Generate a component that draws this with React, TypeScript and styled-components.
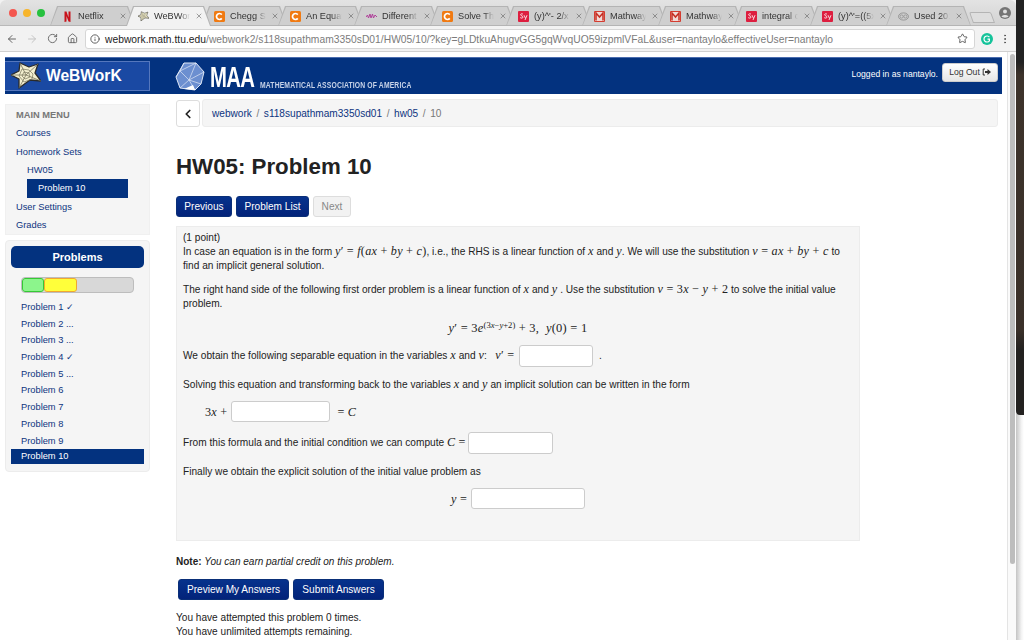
import React from "react";
import styled, { createGlobalStyle } from "styled-components";
import { ArrowLeft, ArrowRight, RotateCw, Home, Info, Star, MoreVertical, X, ChevronLeft } from "lucide-react";

const Global = createGlobalStyle`
  html, body { margin: 0; padding: 0; width: 1024px; height: 640px; overflow: hidden; background: #fff; }
  * { box-sizing: border-box; }
`;
const Blue = "#03327f";
const Win = styled.div`
  width: 1024px; height: 640px; overflow: hidden; display: flex;
  font-family: "Liberation Sans", Arial, sans-serif; background: #fff;
`;
const Window = styled.div`width: 1016px; flex: none; display: flex; flex-direction: column; height: 640px;`;
const Desktop = styled.div`flex: 1; display: flex; flex-direction: column; background: linear-gradient(90deg, #c4c4c4, #f4f4f4 70%, #fff);`;
const Wallpaper = styled.div`
  height: 415px; flex: none; border-bottom-left-radius: 4px;
  background: linear-gradient(#222 0, #222 62px, #3d332b 75px, #3a3029 330px, #232120 350px, #232120 100%);
`;
const Chrome = styled.div`flex: none; background: #f2f2f2;`;
const TabBar = styled.div`
  height: 26px; display: flex; align-items: flex-end; padding-left: 50px; position: relative;
  background: linear-gradient(#e3e3e3, #d3d3d3); border-top-left-radius: 6px; border-top-right-radius: 6px;
  border-bottom: 1px solid #b9b9b9;
`;
const Lights = styled.div`position: absolute; left: 9px; top: 9px; display: flex; gap: 6px;`;
const Light = styled.span<{ $c: string }>`width: 8px; height: 8px; border-radius: 50%; background: ${p => p.$c};`;
const Tab = styled.div<{ $active?: boolean }>`
  width: 85px; height: 20px; margin-right: -9px; flex: none; position: relative; margin-bottom: -1px;
  padding: 0 6px 0 12px; display: flex; align-items: center; gap: 5px;
  z-index: ${p => (p.$active ? 2 : 1)};
  clip-path: polygon(0 100%, 7px 0, calc(100% - 7px) 0, 100% 100%);
  background: #b4b4b4;
  &::before {
    content: ""; position: absolute; inset: 1px 1px ${p => (p.$active ? "0" : "1px")} 1px; z-index: -1;
    background: ${p => (p.$active ? "#f2f2f2" : "#cfcfcf")};
    clip-path: polygon(0 100%, 7px 0, calc(100% - 7px) 0, 100% 100%);
  }
`;
const TabIcon = styled.span`width: 11px; height: 11px; flex: none; display: flex;`;
const TabTitle = styled.span`
  font-size: 9.2px; color: #333; white-space: nowrap; overflow: hidden; width: 36px; flex: none;
  -webkit-mask-image: linear-gradient(90deg, #000 72%, transparent 100%);
  mask-image: linear-gradient(90deg, #000 72%, transparent 100%);
`;
const TabClose = styled.span`display: flex; color: #555; flex: none; margin-left: auto; margin-right: 7px;`;
const NewTab = styled.div`
  width: 22px; height: 11px; margin: 0 0 2px 9px; flex: none; background: #dedede; border: 1px solid #b4b4b4; border-radius: 2px 2px 0 0;
  transform: skewX(20deg);
`;
const Avatar = styled.div`position: absolute; right: 5px; top: 7px; display: flex;`;
const Toolbar = styled.div`
  height: 26px; display: flex; align-items: center; padding-left: 2px; color: #5f5f5f; border-bottom: 1px solid #d0d0d0;
`;
const NavBtn = styled.span<{ $dim?: boolean }>`
  width: 20px; display: flex; justify-content: center; flex: none; color: ${p => (p.$dim ? "#c4c4c4" : "#666")};
`;
const Omni = styled.div`
  width: 890px; height: 20px; margin-left: 3px; background: #fff; border: 1px solid #d6d6d6; border-radius: 3px; display: flex; align-items: center;
  padding: 0 6px 0 4px; flex: none;
`;
const Url = styled.span`font-size: 10.28px; color: #7b7b7b; white-space: nowrap; margin-left: 5px; letter-spacing: 0.03px; padding-top: 1px; b { color: #222; font-weight: 400; }`;
const StarWrap = styled.span`margin-left: auto; display: flex; color: #555;`;
const ExtIcon = styled.span`
  width: 12px; height: 12px; border-radius: 50%; background: #15c39a; margin-left: 6px; display: flex; align-items: center; justify-content: center; flex: none;
`;
const Dots = styled.span`display: flex; color: #555; margin-left: 6px;`;

const Viewport = styled.div`flex: 1; min-height: 0; display: flex; background: #fff; overflow: hidden;`;
const Page = styled.div`width: 1007px; flex: none; padding: 5px 0 0 5px; display: flex; flex-direction: column; min-height: 0;`;
const Scroll = styled.div`
  flex: 1; background: #fafafa; border-left: 1px solid #e4e4e4; padding: 2px 1px 0 2px; display: flex;
`;
const Thumb = styled.div`width: 5px; height: 510px; background: #bdbdbd; border-radius: 3px;`;

const Header = styled.header`
  height: 37px; width: 997px; flex: none; background: ${Blue}; display: flex; align-items: center; border-top: 1px solid #4a6cae;
`;
const Brand = styled.div`
  width: 145px; height: 30px; background: #1a49a3; border: 1px solid #5577bd; border-left: 0; display: flex; align-items: center; gap: 5px; padding-left: 6px; flex: none;
  color: #fff; font-size: 15.6px; font-weight: 700;
`;
const MaaMark = styled.div`margin-left: 25px; display: flex; flex: none; align-items: center;`;
const MaaBig = styled.span`
  color: #fff; font-size: 29px; font-weight: 700; width: 44px; margin: 2px 0 0 5px; transform: scaleX(.7); transform-origin: left; letter-spacing: -1px; flex: none; line-height: 28px;
`;
const MaaSub = styled.span`
  color: #c8d3e8; font-size: 9.5px; font-weight: 700; white-space: nowrap; width: 153px; margin: 17px 0 0 6px; transform: scaleX(.715); transform-origin: left; letter-spacing: .2px; flex: none;
`;
const Logged = styled.span`margin-left: auto; margin-top: -5px; color: #fff; font-size: 8.6px; white-space: nowrap;`;
const LogOut = styled.span`
  background: linear-gradient(#fff, #e6e6e6); border: 1px solid #ccc; border-radius: 3px; height: 19px; width: 56px; margin: -8px 4px 0 4px; font-size: 8.6px; color: #333;
  display: flex; align-items: center; justify-content: center; gap: 2px; flex: none;
`;
const Columns = styled.div`display: flex; gap: 26px; padding-top: 5px; align-items: flex-start;`;
const Side = styled.aside`width: 145px; flex: none; display: flex; flex-direction: column; gap: 5px;`;
const Menu = styled.nav`background: #f5f5f5; height: 131px; margin-top: 5px; padding-top: 1px; border: 1px solid #f0f0f0;`;
const MenuHead = styled.div`height: 18.3px; line-height: 18px; padding-left: 10px; font-size: 9.3px; font-weight: 700; color: #777;`;
const MenuLink = styled.div<{ $lvl?: number }>`
  height: 18.3px; line-height: 18px; padding-left: ${p => 10 + (p.$lvl ?? 0) * 11}px; font-size: 9.3px; color: #0d3480;
`;
const MenuActive = styled.div`
  height: 19px; line-height: 18.5px; margin-left: 21px; width: 101px; padding-left: 11px; background: ${Blue}; color: #fff; font-size: 9.3px;
`;
const Panel = styled.section`
  background: #f5f5f5; border: 1px solid #ececec; border-radius: 4px; height: 232px; padding: 5px 5px 0;
`;
const PanelHead = styled.div`
  height: 22px; background: ${Blue}; border-radius: 5px; color: #fff; font-size: 11px; font-weight: 700; text-align: center; line-height: 22px;
`;
const Progress = styled.div`
  height: 16px; margin: 9px 10px 6px; background: #d8d8d8; border: 1px solid #bdbdbd; border-radius: 4px; display: flex; overflow: hidden;
`;
const Seg = styled.span<{ $bg: string; $bd: string; $w: number }>`
  width: ${p => p.$w}px; background: ${p => p.$bg}; border: 1px solid ${p => p.$bd}; border-radius: 3px; flex: none;
`;
const ProbLink = styled.div`height: 16.7px; line-height: 16px; padding-left: 10px; font-size: 9.3px; color: #0d3480;`;
const ProbActive = styled.div`height: 15px; line-height: 14.5px; padding-left: 10px; font-size: 9.3px; color: #fff; background: ${Blue};`;

const Main = styled.main`width: 822px; flex: none; font-size: 10.1px; color: #222;`;
const Crumbs = styled.div`display: flex; gap: 2px; height: 28px;`;
const Back = styled.div`
  width: 24px; height: 27px; background: #fff; border: 1px solid #ddd; border-radius: 3px; margin-top: 1px; display: flex; align-items: center; justify-content: center; color: #222; flex: none;
`;
const CrumbBar = styled.div`
  flex: 1; background: #f5f5f5; border: 1px solid #ececec; border-radius: 3px; padding-left: 9px; line-height: 27px; font-size: 10.1px; color: #777; word-spacing: 1.8px;
  span { color: #0d3480; }
`;
const Title = styled.h1`margin: 26px 0 0; height: 43px; font-size: 22.3px; line-height: 28px; font-weight: 700; color: #222;`;
const Btns = styled.div<{ $pad?: number }>`display: flex; gap: 4px; padding-left: ${p => p.$pad ?? 0}px;`;
const Btn = styled.span<{ $w: number; $off?: boolean }>`
  width: ${p => p.$w}px; height: 21px; border-radius: 3px; font-size: 10.1px; display: flex; align-items: center; justify-content: center; flex: none;
  color: ${p => (p.$off ? "#888" : "#fff")};
  background: ${p => (p.$off ? "#f2f2f2" : "linear-gradient(#06328c, #03237a)")};
  border: 1px solid ${p => (p.$off ? "#ddd" : "#0a2f78")};
`;
const Box = styled.div`
  width: 684px; height: 315px; margin-top: 9px; background: #f5f5f5; border: 1px solid #ececec; padding: 4px 6px 0;
  font-size: 10.15px; line-height: 14px; color: #222;
`;
const P = styled.p<{ $mt?: number }>`margin: ${p => p.$mt ?? 0}px 0 0; white-space: nowrap;`;
const Row = styled.div<{ $mt: number; $h: number; $pl?: number; $center?: boolean }>`
  display: flex; align-items: center; white-space: nowrap;
  margin-top: ${p => p.$mt}px; height: ${p => p.$h}px; padding-left: ${p => p.$pl ?? 0}px;
  justify-content: ${p => (p.$center ? "center" : "flex-start")};
`;
const Display = styled.span`font-size: 10.4px;`;
const M = styled.i`font-family: "Liberation Serif", "Times New Roman", serif; font-size: 1.2em; font-style: italic; color: #222; line-height: 0; letter-spacing: .25px;`;
const R = styled.span`font-family: "Liberation Serif", "Times New Roman", serif; font-size: 1.2em; font-style: normal; color: #222; line-height: 0; letter-spacing: .25px;`;
const Sup = styled.sup`font-family: "Liberation Serif", serif; font-size: 8.600px; line-height: 0; vertical-align: 4px;`;
const Field = styled.span<{ $w: number; $h: number; $ml?: number; $mr?: number }>`
  width: ${p => p.$w}px; height: ${p => p.$h}px; margin-left: ${p => p.$ml ?? 3}px; margin-right: ${p => p.$mr ?? 0}px; background: #fff; border: 1px solid #ccc; border-radius: 3px; flex: none; display: inline-block;
`;
const Note = styled.p`margin: 14px 0 0; font-size: 10px; line-height: 14px; i { font-style: italic; }`;
const Attempts = styled.p`margin: 11px 0 0; font-size: 10.1px; line-height: 14px;`;
const Gap = styled.div`height: 10px;`;

const Netflix = () => (
  <svg width="11" height="11" viewBox="0 0 11 11"><path d="M2.500 0.500h2l2 6v-6h2v10.500l-2-.4-2-5.600v5.600l-2 .4z" fill="#c8111a" /></svg>
);
const StarLogo = ({ s }: { s: number }) => (
  <svg width={s} height={s} viewBox="0 0 30 30">
    <path d="M9 2 L18 6 L27 3 L24 12 L30 20 L19 19 L8 27 L8 18 L0 14 L8 10 Z" fill="#f3efcf" stroke="#2a2a2a" strokeWidth="1.300" strokeLinejoin="round" />
    <path d="M15 14 L9 2 M15 14 L27 3 M15 14 L30 20 M15 14 L8 27 M15 14 L0 14" stroke="#77745c" strokeWidth=".8" fill="none" />
    <path d="M11 8 L18 9 L22 13 L21 18 L13 21 L8 15 Z M13 11 L18 12 L19 16 L14 18 L11 15 Z" fill="none" stroke="#77745c" strokeWidth=".7" />
  </svg>
);
const Chegg = () => (
  <svg width="11" height="11" viewBox="0 0 11 11"><rect width="11" height="11" rx="1.500" fill="#f07a12" /><path d="M7.800 3.600A3 3 0 1 0 7.800 7.400" stroke="#fff" strokeWidth="1.700" fill="none" /></svg>
);
const Sy = () => (
  <svg width="11" height="11" viewBox="0 0 11 11"><rect width="11" height="11" rx="1" fill="#dd1e3f" /><path d="M5 3.200C4 2.400 2.400 2.800 2.600 3.900 2.800 5 5 4.800 5 6.100 5 7.300 3.100 7.400 2.200 6.600M6 4.200l1.400 3M9 4.200 7 9" stroke="#fff" strokeWidth=".8" fill="none" /></svg>
);
const Mathway = () => (
  <svg width="11" height="11" viewBox="0 0 11 11"><rect width="11" height="11" rx="1" fill="#d43c30" /><rect x="1" y="1" width="9" height="9" fill="#f2d9d5" /><path d="M2 9.500V2l3.500 4L9 2v7.500" stroke="#c62e22" strokeWidth="1.500" fill="none" /></svg>
);
const Sym = () => (
  <svg width="11" height="11" viewBox="0 0 11 11"><path d="M0 6l1.500-2 1 3 1.500-4 1 4 1.500-4 1 4 1.500-3L11 6" stroke="#b0409a" strokeWidth="1" fill="none" /></svg>
);
const Used = () => (
  <svg width="11" height="11" viewBox="0 0 11 11"><ellipse cx="5.500" cy="5.500" rx="5" ry="3.600" fill="none" stroke="#8a8a8a" strokeWidth=".8" /><circle cx="3.600" cy="5.500" r="1.600" fill="none" stroke="#8a8a8a" strokeWidth=".7" /><circle cx="7.400" cy="5.500" r="1.600" fill="none" stroke="#8a8a8a" strokeWidth=".7" /></svg>
);
const MaaLogo = () => (
  <svg width="30" height="29" viewBox="0 0 30 29">
    <path d="M9 1 L21 1 L29 10 L26 22 L20 28 L5 26 L1 15 Z" fill="#6c8fd0" stroke="#dfe7f5" strokeWidth="1" />
    <path d="M9 1 L5 9 L1 15 M5 9 L21 1 M5 9 L14 18 L29 10 M14 18 L5 26 M14 18 L20 28 M14 18 L26 22 M21 1 L14 18" stroke="#dfe7f5" strokeWidth=".7" fill="none" />
    <path d="M9 27 L20 28 L18 23 Z" fill="#fff" />
  </svg>
);
const LogOutGlyph = () => (
  <svg width="9" height="8" viewBox="0 0 9 8"><path d="M3 1H1.200v6H3" stroke="#333" strokeWidth="1" fill="none" /><path d="M3 3h2.500V1L9 4 5.500 7V5H3z" fill="#333" /></svg>
);

const tabs: [React.ReactNode, string][] = [
  [<Netflix />, "Netflix"],
  [<StarLogo s={11} />, "WeBWorK"],
  [<Chegg />, "Chegg St"],
  [<Chegg />, "An Equat"],
  [<Sym />, "Different"],
  [<Chegg />, "Solve The"],
  [<Sy />, "(y)^'- 2/x"],
  [<Mathway />, "Mathway"],
  [<Mathway />, "Mathway"],
  [<Sy />, "integral o"],
  [<Sy />, "(y)^'=((5x"],
  [<Used />, "Used 201"],
];
const problems = ["Problem 1 ✓", "Problem 2 ...", "Problem 3 ...", "Problem 4 ✓", "Problem 5 ...", "Problem 6", "Problem 7", "Problem 8", "Problem 9"];

export default function App() {
  return (
    <Win>
      <Global />
      <Window>
        <Chrome>
          <TabBar>
            <Lights>
              <Light $c="#f4574f" /><Light $c="#f7b52c" /><Light $c="#27c13f" />
            </Lights>
            {tabs.map(([icon, title], i) => (
              <Tab key={i} $active={i === 1}>
                <TabIcon>{icon}</TabIcon>
                <TabTitle>{title}</TabTitle>
                <TabClose><X size={8} strokeWidth={1.6} /></TabClose>
              </Tab>
            ))}
            <NewTab />
            <Avatar>
              <svg width="12" height="12" viewBox="0 0 12 12"><circle cx="6" cy="6" r="6" fill="#757575" /><circle cx="6" cy="4.600" r="2" fill="#e0e0e0" /><path d="M2.500 9.500C3.500 7.500 8.500 7.500 9.500 9.500 8 11 4 11 2.500 9.500Z" fill="#e0e0e0" /></svg>
            </Avatar>
          </TabBar>
          <Toolbar>
            <NavBtn><ArrowLeft size={12} /></NavBtn>
            <NavBtn $dim><ArrowRight size={12} /></NavBtn>
            <NavBtn><RotateCw size={11} /></NavBtn>
            <NavBtn><Home size={11} /></NavBtn>
            <Omni>
              <Info size={10} color="#444" />
              <Url><b>webwork.math.ttu.edu</b>/webwork2/s118supathmam3350sD01/HW05/10/?key=gLDtkuAhugvGG5gqWvqUO59izpmlVFaL&amp;user=nantaylo&amp;effectiveUser=nantaylo</Url>
              <StarWrap><Star size={11} /></StarWrap>
            </Omni>
            <ExtIcon>
              <svg width="8" height="8" viewBox="0 0 8 8"><path d="M6.400 2.200A3 3 0 1 0 6.400 5.800V4.200H4.500" stroke="#fff" strokeWidth="1.200" fill="none" /></svg>
            </ExtIcon>
            <Dots><MoreVertical size={12} /></Dots>
          </Toolbar>
        </Chrome>
        <Viewport>
          <Page>
            <Header>
              <Brand><StarLogo s={30} />WeBWorK</Brand>
              <MaaMark>
                <MaaLogo />
                <MaaBig>MAA</MaaBig>
                <MaaSub>MATHEMATICAL ASSOCIATION OF AMERICA</MaaSub>
              </MaaMark>
              <Logged>Logged in as nantaylo.</Logged>
              <LogOut>Log Out <LogOutGlyph /></LogOut>
            </Header>
            <Columns>
              <Side>
                <Menu>
                  <MenuHead>MAIN MENU</MenuHead>
                  <MenuLink>Courses</MenuLink>
                  <MenuLink>Homework Sets</MenuLink>
                  <MenuLink $lvl={1}>HW05</MenuLink>
                  <MenuActive>Problem 10</MenuActive>
                  <MenuLink>User Settings</MenuLink>
                  <MenuLink>Grades</MenuLink>
                </Menu>
                <Panel>
                  <PanelHead>Problems</PanelHead>
                  <Progress>
                    <Seg $w={22} $bg="#8cf58c" $bd="#35c935" />
                    <Seg $w={33} $bg="#ffff3a" $bd="#f0a830" />
                  </Progress>
                  {problems.map(t => <ProbLink key={t}>{t}</ProbLink>)}
                  <ProbActive>Problem 10</ProbActive>
                </Panel>
              </Side>
              <Main>
                <Crumbs>
                  <Back><ChevronLeft size={14} strokeWidth={3} /></Back>
                  <CrumbBar><span>webwork</span> / <span>s118supathmam3350sd01</span> / <span>hw05</span> / 10</CrumbBar>
                </Crumbs>
                <Title>HW05: Problem 10</Title>
                <Btns>
                  <Btn $w={56}>Previous</Btn>
                  <Btn $w={73}>Problem List</Btn>
                  <Btn $w={38} $off>Next</Btn>
                </Btns>
                <Box>
                  <P>(1 point)</P>
                  <P>In case an equation is in the form <M>y</M><R>′ = </R><M>f</M><R>(</R><M>ax</M><R> + </R><M>by</M><R> + </R><M>c</M><R>)</R>, i.e., the RHS is a linear function of <M>x</M> and <M>y</M>. We will use the substitution <M>v</M><R> = </R><M>ax</M><R> + </R><M>by</M><R> + </R><M>c</M> to</P>
                  <P>find an implicit general solution.</P>
                  <P $mt={10}>The right hand side of the following first order problem is a linear function of <M>x</M> and <M>y</M> . Use the substitution <M>v</M><R> = 3</R><M>x</M><R> − </R><M>y</M><R> + 2</R> to solve the initial value</P>
                  <P>problem.</P>
                  <Row $mt={7} $h={22} $center>
                    <Display><M>y</M><R>′ = 3</R><M>e</M><Sup>(3<i>x</i>−<i>y</i>+2)</Sup><R> + 3,&nbsp;&nbsp;</R><M>y</M><R>(0) = 1</R></Display>
                  </Row>
                  <Row $mt={5} $h={22}>
                    <span>We obtain the following separable equation in the variables <M>x</M> and <M>v</M>:&nbsp;&nbsp;&nbsp;<M>v</M><R>′ =</R></span>
                    <Field $w={74} $h={22} $ml={5} />
                    <span>&nbsp;&nbsp;.</span>
                  </Row>
                  <P $mt={11}>Solving this equation and transforming back to the variables <M>x</M> and <M>y</M> an implicit solution can be written in the form</P>
                  <Row $mt={9} $h={21} $pl={22}>
                    <R>3<i>x</i> +</R>
                    <Field $w={99} $h={21} $ml={4} $mr={7} />
                    <R>= <i>C</i></R>
                  </Row>
                  <Row $mt={10} $h={22}>
                    <span>From this formula and the initial condition we can compute <M>C</M><R> =</R></span>
                    <Field $w={85} $h={22} $ml={2} />
                  </Row>
                  <P $mt={11}>Finally we obtain the explicit solution of the initial value problem as</P>
                  <Row $mt={9} $h={21} $center>
                    <R><i>y</i> =</R>
                    <Field $w={114} $h={21} $ml={4} />
                  </Row>
                </Box>
                <Note><b>Note:</b> <i>You can earn partial credit on this problem.</i></Note>
                <Gap />
                <Btns $pad={2}>
                  <Btn $w={111}>Preview My Answers</Btn>
                  <Btn $w={91}>Submit Answers</Btn>
                </Btns>
                <Attempts>You have attempted this problem 0 times.<br />You have unlimited attempts remaining.</Attempts>
              </Main>
            </Columns>
          </Page>
          <Scroll><Thumb /></Scroll>
        </Viewport>
      </Window>
      <Desktop><Wallpaper /></Desktop>
    </Win>
  );
}
